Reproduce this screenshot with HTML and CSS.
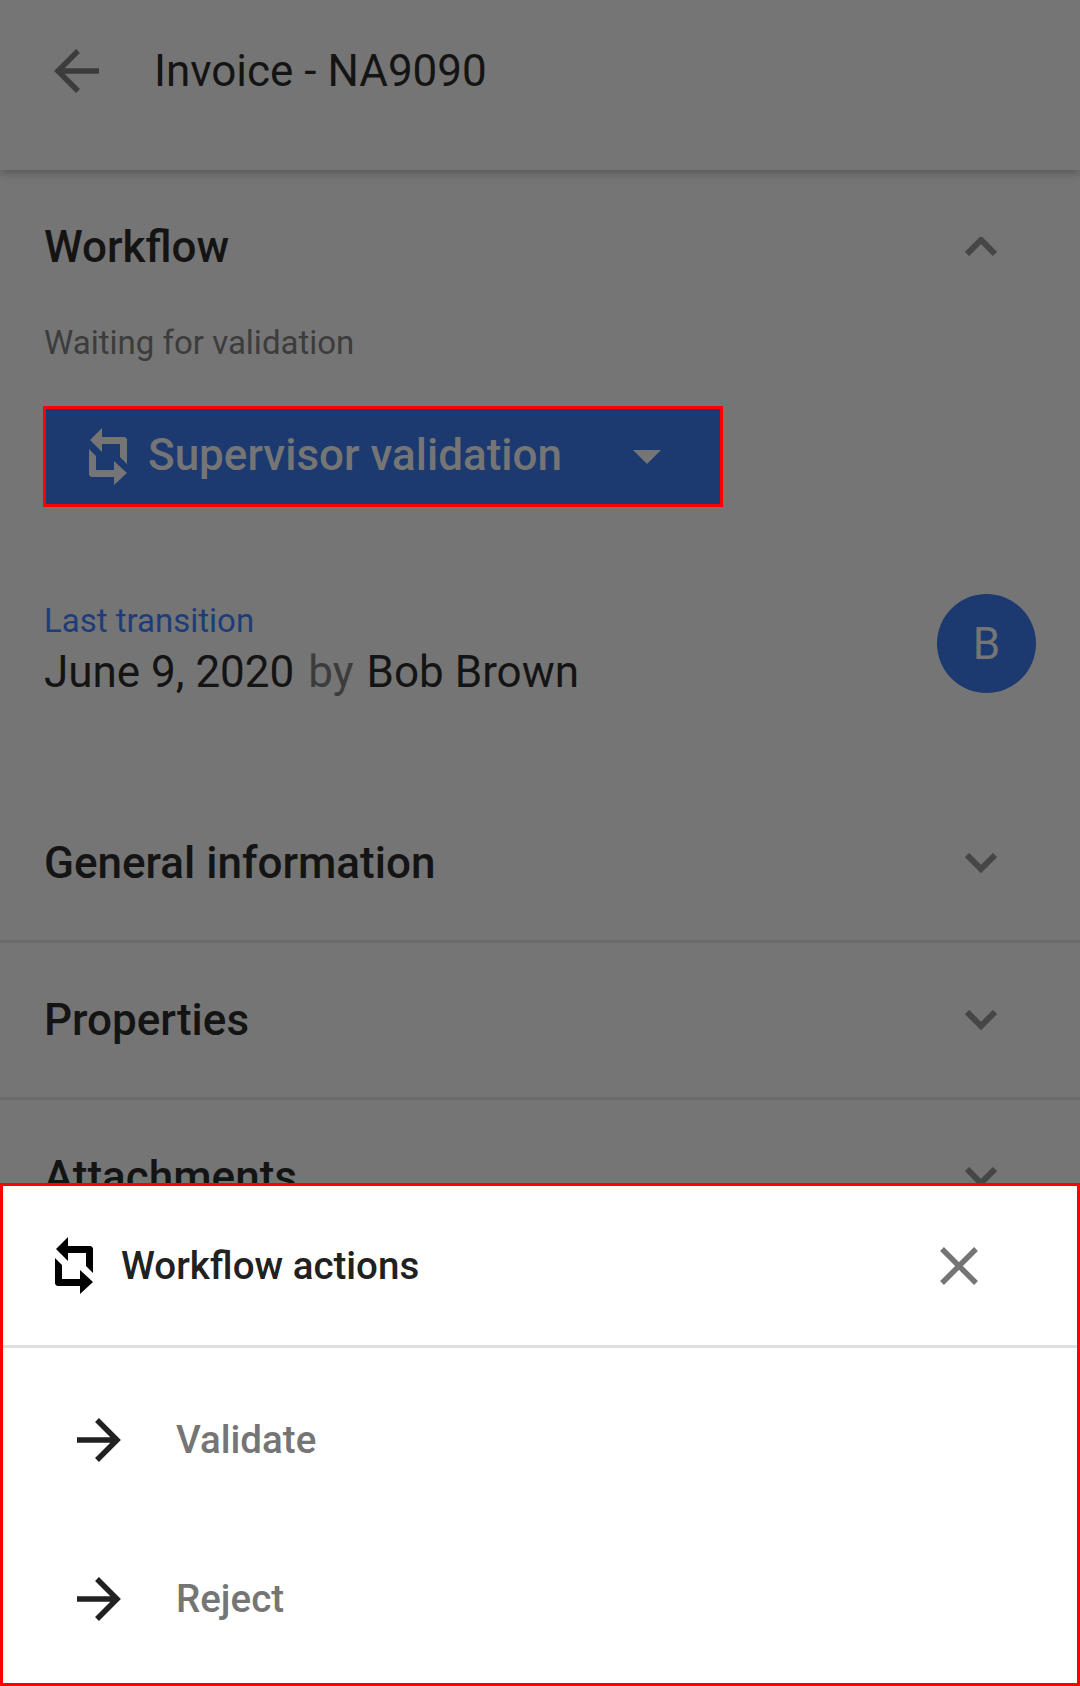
FILE: index.html
```html
<!DOCTYPE html>
<html lang="en">
<head>
<meta charset="utf-8">
<title>Invoice - NA9090</title>
<link rel="stylesheet" href="styles.css">
</head>
<body>
<div class="screen">
  <header class="appbar">
    <svg class="back" viewBox="0 0 46 46"><path d="M45 23H4M24 3 4 23l20 20"/></svg>
    <h1 class="appbar-title">Invoice - NA9090</h1>
  </header>
  <main class="content">
    <section class="panel panel-open">
      <div class="panel-head">
        <h2 class="panel-title">Workflow</h2>
        <svg class="chev" viewBox="0 0 32 20"><path d="M2 17 16 3l14 14"/></svg>
      </div>
      <p class="status">Waiting for validation</p>
      <div class="state-btn">
        <svg class="repeat repeat-muted" viewBox="0 0 40 58"><path d="M2 12 14 0v9h23l2 2v25l-7-7V16H14v8ZM39 45 26 57v-8H3l-2-2V21l7 7v14h18v-9Z"/></svg>
        <span class="state-label">Supervisor validation</span>
        <span class="caret"></span>
      </div>
      <div class="transition">
        <div class="transition-text">
          <div class="transition-label">Last transition</div>
          <div class="transition-value">June 9, 2020<span class="by">by</span>Bob Brown</div>
        </div>
        <div class="avatar">B</div>
      </div>
    </section>
    <section class="panel panel-ruled">
      <div class="panel-head">
        <h2 class="panel-title">General information</h2>
        <svg class="chev" viewBox="0 0 32 20"><path d="M2 2l14 14L30 2"/></svg>
      </div>
    </section>
    <section class="panel panel-ruled">
      <div class="panel-head">
        <h2 class="panel-title">Properties</h2>
        <svg class="chev" viewBox="0 0 32 20"><path d="M2 2l14 14L30 2"/></svg>
      </div>
    </section>
    <section class="panel">
      <div class="panel-head">
        <h2 class="panel-title">Attachments</h2>
        <svg class="chev" viewBox="0 0 32 20"><path d="M2 2l14 14L30 2"/></svg>
      </div>
    </section>
  </main>
  <aside class="sheet">
    <div class="sheet-head">
      <svg class="repeat" viewBox="0 0 40 58"><path d="M2 12 14 0v9h23l2 2v25l-7-7V16H14v8ZM39 45 26 57v-8H3l-2-2V21l7 7v14h18v-9Z"/></svg>
      <span class="sheet-title">Workflow actions</span>
      <svg class="close" viewBox="0 0 38 38"><path d="M2 2l34 34M36 2 2 36"/></svg>
    </div>
    <div class="actions">
      <div class="action">
        <svg class="forward" viewBox="0 0 44 44"><path d="M0 22h39M20 2l20 20-20 20"/></svg>
        <span class="action-label">Validate</span>
      </div>
      <div class="action">
        <svg class="forward" viewBox="0 0 44 44"><path d="M0 22h39M20 2l20 20-20 20"/></svg>
        <span class="action-label">Reject</span>
      </div>
    </div>
  </aside>
</div>
</body>
</html>
```
FILE: styles.css
```css
* { box-sizing: border-box; }
html, body { margin: 0; padding: 0; }
body { font-family: Roboto, "Liberation Sans", sans-serif; background: #757575; }
.screen { width: 1080px; height: 1686px; display: flex; flex-direction: column; overflow: hidden; background: #757575; }

.appbar { height: 170px; flex: none; display: flex; align-items: flex-start; padding: 48px 0 0 54px; box-shadow: 0 2px 10px rgba(0,0,0,.3); position: relative; z-index: 1; }
.back { width: 46px; height: 46px; margin-right: 54px; fill: none; stroke: #3c3c3c; stroke-width: 5.5; }
.appbar-title { margin: 0; font-size: 44px; font-weight: 400; line-height: 46px; color: #141414; }

.content { flex: 1; min-height: 0; overflow: hidden; }
.panel { padding: 0 44px; }
.panel-ruled { border-bottom: 3px solid #6a6a6a; }
.panel-head { height: 154px; display: flex; align-items: center; justify-content: space-between; }
.panel-title { margin: 0; font-size: 44px; font-weight: 500; color: #141414; }
.chev { width: 32px; height: 20px; margin-right: 39px; fill: none; stroke: #464646; stroke-width: 6; }

.status { margin: 0; font-size: 33px; line-height: 38px; height: 36px; color: #3c3c3c; }
.state-btn { width: 680px; height: 101px; margin: 46px 0 0 -1px; display: flex; align-items: center; padding-left: 42px; background: #1c3a70; border: 3px solid #ff0000; }
.repeat { width: 40px; height: 58px; flex: none; fill: #000; }
.repeat-muted { fill: #757575; }
.state-label { margin-left: 20px; padding-bottom: 4px; font-size: 44px; font-weight: 500; color: #757575; }
.caret { margin-left: 71px; border-left: 14px solid transparent; border-right: 14px solid transparent; border-top: 14px solid #757575; }

.transition { display: flex; align-items: flex-start; justify-content: space-between; margin: 87px 0 93px; height: 99px; }
.transition-text { padding-top: 5px; }
.transition-label { font-size: 33px; line-height: 44px; color: #1e3d78; }
.transition-value { font-size: 44px; line-height: 59px; color: #141414; }
.by { margin: 0 13px 0 14px; color: #3c3c3c; }
.avatar { width: 99px; height: 99px; border-radius: 50%; background: #1c3a70; color: #757575; font-size: 44px; display: flex; align-items: center; justify-content: center; }

.sheet { flex: none; height: 503px; background: #fff; border: 3px solid #ff0000; }
.sheet-head { height: 162px; display: flex; align-items: center; padding: 0 0 0 51px; border-bottom: 3px solid #e0e0e0; }
.sheet-title { margin-left: 27px; font-size: 38.5px; font-weight: 500; color: #212121; flex: 1; }
.close { width: 38px; height: 38px; margin-right: 99px; fill: none; stroke: #757575; stroke-width: 5.5; }
.actions { padding-top: 12px; }
.action { height: 159px; display: flex; align-items: center; padding-left: 74px; }
.forward { width: 44px; height: 44px; fill: none; stroke: #212121; stroke-width: 5.5; }
.action-label { margin-left: 55px; font-size: 38.5px; font-weight: 500; color: #757575; }
```
